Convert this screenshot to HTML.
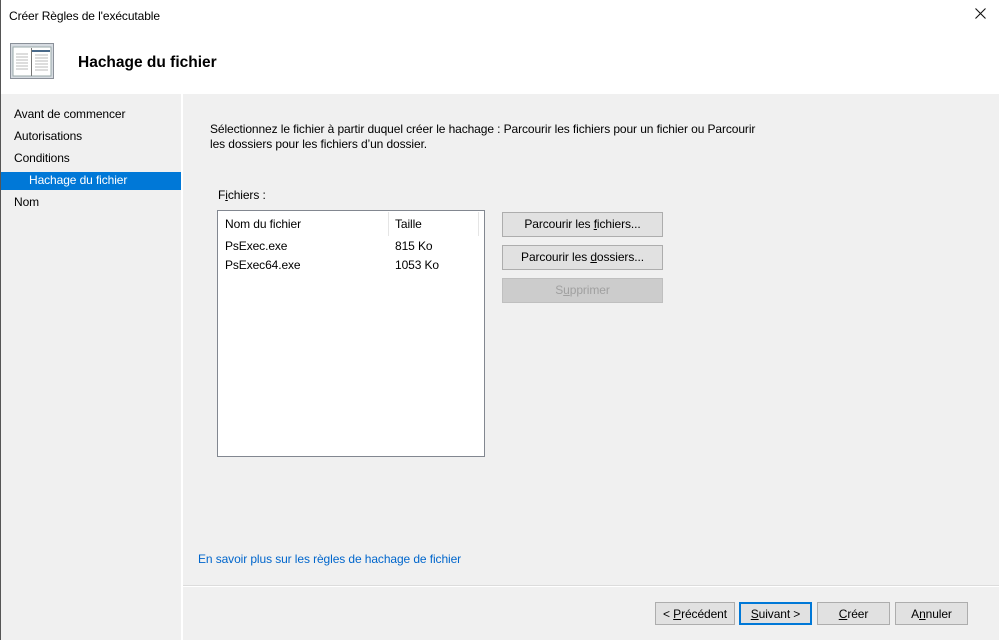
<!DOCTYPE html><html><head><meta charset="utf-8"><style>
body{margin:0;width:999px;height:640px;position:relative;background:#f0f0f0;font-family:"Liberation Sans",sans-serif;font-size:12px;color:#000;overflow:hidden;letter-spacing:-0.1px}
.a{position:absolute;white-space:nowrap}
.btn{position:absolute;background:#e1e1e1;border:1px solid #adadad;box-sizing:border-box;text-align:center;font-size:12px;line-height:22px}
u{text-decoration:underline}
</style></head><body>
<div class="a" style="left:0;top:0;width:999px;height:94px;background:#fff"></div>
<div class="a" style="left:0;top:0;width:1px;height:640px;background:#555"></div>
<div class="a" style="left:9px;top:9px;font-size:12px">Créer Règles de l'exécutable</div>
<svg class="a" style="left:975px;top:8px" width="11" height="11" viewBox="0 0 11 11"><path d="M0.5 0.5L10.5 10.5M10.5 0.5L0.5 10.5" stroke="#111" stroke-width="1.1"/></svg>
<svg class="a" style="left:10px;top:43px" width="44" height="36" viewBox="0 0 44 36">
<rect x="0.5" y="0.5" width="43" height="35" fill="#d6dbe1" stroke="#8a9099"/>
<rect x="3" y="4" width="38" height="29" fill="#fff" stroke="#9aa"/>
<rect x="22" y="7" width="18" height="2" fill="#4a6a8a"/>
<line x1="21.5" y1="5" x2="21.5" y2="33" stroke="#777"/>
<g stroke="#bbb"><line x1="6" y1="11" x2="18" y2="11"/><line x1="6" y1="14" x2="18" y2="14"/><line x1="6" y1="17" x2="18" y2="17"/><line x1="6" y1="20" x2="18" y2="20"/><line x1="6" y1="23" x2="18" y2="23"/><line x1="6" y1="26" x2="18" y2="26"/><line x1="25" y1="12" x2="38" y2="12"/><line x1="25" y1="15" x2="38" y2="15"/><line x1="25" y1="18" x2="38" y2="18"/><line x1="25" y1="21" x2="38" y2="21"/><line x1="25" y1="24" x2="38" y2="24"/><line x1="25" y1="27" x2="38" y2="27"/></g>
</svg>
<div class="a" style="left:78px;top:54px;font-size:15.5px;font-weight:bold;letter-spacing:0">Hachage du fichier</div>
<div class="a" style="left:181px;top:94px;width:2px;height:546px;background:#fff"></div>
<div class="a" style="left:14px;top:107px">Avant de commencer</div>
<div class="a" style="left:14px;top:129px">Autorisations</div>
<div class="a" style="left:14px;top:151px">Conditions</div>
<div class="a" style="left:1px;top:172px;width:180px;height:18px;background:#0078d7"></div>
<div class="a" style="left:29px;top:173px;color:#fff">Hachage du fichier</div>
<div class="a" style="left:14px;top:195px">Nom</div>
<div class="a" style="left:210px;top:122px;line-height:15px">Sélectionnez le fichier à partir duquel créer le hachage : Parcourir les fichiers pour un fichier ou Parcourir<br>les dossiers pour les fichiers d’un dossier.</div>
<div class="a" style="left:218px;top:188px">F<u>i</u>chiers :</div>
<div class="a" style="left:217px;top:210px;width:268px;height:247px;background:#fff;border:1px solid #828790;box-sizing:border-box"></div>
<div class="a" style="left:388px;top:212px;width:1px;height:24px;background:#e5e5e5"></div>
<div class="a" style="left:478px;top:212px;width:1px;height:24px;background:#e5e5e5"></div>
<div class="a" style="left:225px;top:217px">Nom du fichier</div>
<div class="a" style="left:395px;top:217px">Taille</div>
<div class="a" style="left:225px;top:239px">PsExec.exe</div>
<div class="a" style="left:395px;top:239px">815 Ko</div>
<div class="a" style="left:225px;top:258px">PsExec64.exe</div>
<div class="a" style="left:395px;top:258px">1053 Ko</div>
<div class="btn" style="left:502px;top:212px;width:161px;height:25px;line-height:23px">Parcourir les <u>f</u>ichiers...</div>
<div class="btn" style="left:502px;top:245px;width:161px;height:25px;line-height:23px">Parcourir les <u>d</u>ossiers...</div>
<div class="btn" style="left:502px;top:278px;width:161px;height:25px;line-height:23px;background:#cccccc;border-color:#bfbfbf;color:#a0a0a0">S<u>u</u>pprimer</div>
<div class="a" style="left:198px;top:552px;color:#0066cc">En savoir plus sur les règles de hachage de fichier</div>
<div class="a" style="left:183px;top:585px;width:816px;height:1px;background:#dcdcdc"></div>
<div class="a" style="left:183px;top:586px;width:816px;height:1px;background:#fff"></div>
<div class="btn" style="left:655px;top:602px;width:80px;height:23px;line-height:22px">&lt; <u>P</u>récédent</div>
<div class="btn" style="left:739px;top:602px;width:73px;height:23px;line-height:20px;border:2px solid #0078d7"><u>S</u>uivant &gt;</div>
<div class="btn" style="left:817px;top:602px;width:73px;height:23px;line-height:22px"><u>C</u>réer</div>
<div class="btn" style="left:895px;top:602px;width:73px;height:23px;line-height:22px">A<u>n</u>nuler</div>
</body></html>
